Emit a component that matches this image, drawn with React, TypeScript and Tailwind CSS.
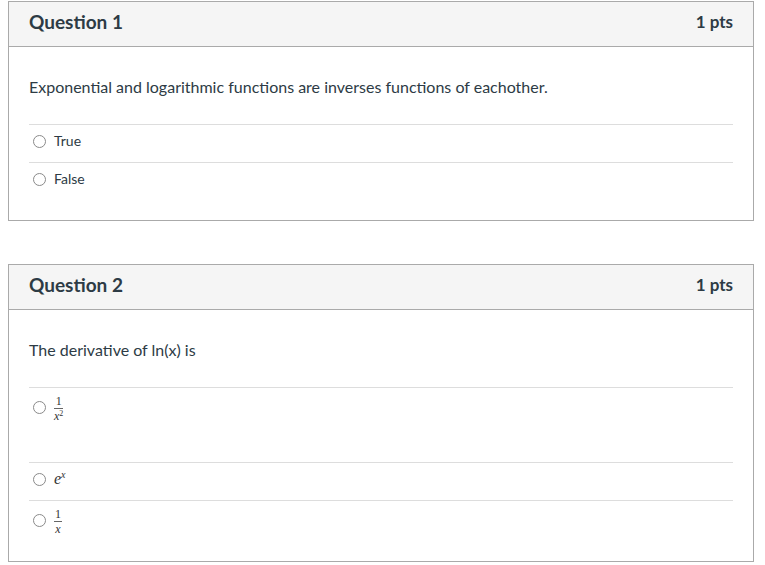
import { FC, ReactNode } from "react";

type OptionType = { label: ReactNode; h?: string; pt?: string };

const Radio: FC = () => (
    <span className="inline-block w-[13px] h-[13px] rounded-full border border-[#8a8a8a] bg-white shrink-0" />
);

const Frac: FC<{ num: ReactNode; den: ReactNode }> = ({ num, den }) => (
    <span className="inline-flex flex-col items-center leading-none font-['Liberation_Serif',serif] text-[12px] text-[#333]">
        <span className="px-[1px] pb-[1px]">{num}</span>
        <span className="w-full border-t border-[#666]" />
        <span className="italic pt-[1px]">{den}</span>
    </span>
);

const Question: FC<{ n: number; text: string; options: OptionType[] }> = ({ n, text, options }) => (
    <div className="border border-[#aaa] bg-white">
        <div className="h-[45px] bg-[#f5f5f5] border-b border-[#aaa] flex items-center justify-between px-[20px] pb-[4px]">
            <span className="text-[19px] font-bold text-[#2d3b45]">Question {n}</span>
            <span className="text-[17px] font-bold text-[#2d3b45]">1 pts</span>
        </div>
        <div className="px-[20px] pt-[28px] pb-[20px]">
            <p className="text-[16px] text-[#2d3b45] leading-[24px] mb-[25px]">{text}</p>
            {options.map((o, i) => (
                <div key={i} className={`border-t border-[#ddd] pl-[4px] ${o.h ?? "h-[38px]"} ${o.pt ?? "pt-[8px]"}`}>
                    <div className="flex items-center gap-[8px] min-h-[16px]">
                        <Radio />
                        <span className="text-[14px] text-[#2d3b45] leading-[16px]">{o.label}</span>
                    </div>
                </div>
            ))}
        </div>
    </div>
);

const App: FC = () => {
    return (
        <div className="w-[765px] h-[565px] bg-white font-['Lato',sans-serif] pl-[8px] pt-[1px]">
            <div className="w-[746px] flex flex-col gap-[43px]">
                <Question
                    n={1}
                    text="Exponential and logarithmic functions are inverses functions of eachother."
                    options={[{ label: "True" }, { label: "False" }]}
                />
                <Question
                    n={2}
                    text="The derivative of ln(x) is"
                    options={[
                        {
                            label: (
                                <Frac
                                    num="1"
                                    den={
                                        <>
                                            x<sup className="text-[8px] not-italic -top-[4px]">2</sup>
                                        </>
                                    }
                                />
                            ),
                            h: "h-[75px]",
                            pt: "pt-[4px]",
                        },
                        {
                            label: (
                                <span className="font-['Liberation_Serif',serif] italic text-[16px] text-[#333] leading-none">
                                    e<sup className="text-[10px] -top-[6px]">x</sup>
                                </span>
                            ),
                        },
                        { label: <Frac num="1" den="x" />, h: "h-[41px]", pt: "pt-[4px]" },
                    ]}
                />
            </div>
        </div>
    );
};

export default App;
